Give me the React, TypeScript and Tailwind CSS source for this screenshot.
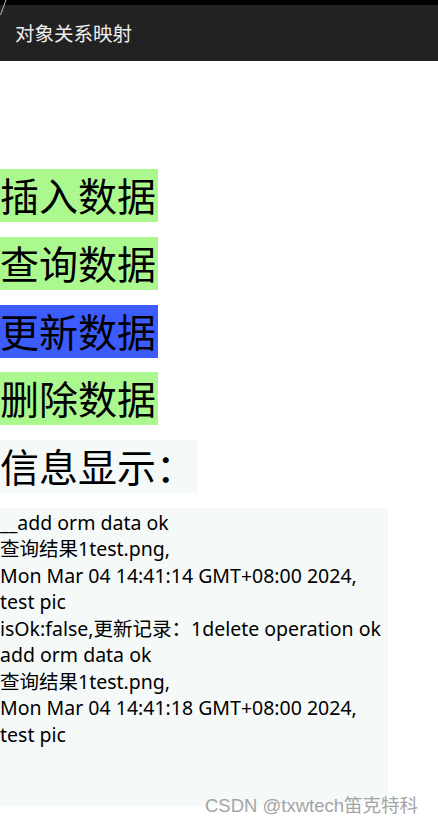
import React from "react";

const FONT = '"Noto Sans", "Noto Sans CJK SC", sans-serif';

const lines = [
  "__add orm data ok",
  "查询结果1test.png,",
  "Mon Mar 04 14:41:14 GMT+08:00 2024,",
  "test pic",
  "isOk:false,更新记录：1delete operation ok",
  "add orm data ok",
  "查询结果1test.png,",
  "Mon Mar 04 14:41:18 GMT+08:00 2024,",
  "test pic",
];

export default function App() {
  return (
    <div
      className="relative w-[438px] h-[825px] bg-white overflow-hidden text-black"
      style={{ fontFamily: FONT }}
    >
      <div className="h-[5px] bg-black" />
      <div className="h-[56px] bg-[#222222] flex items-center pl-[15px] pt-[2px]">
        <span className="text-[19.5px] text-[#eeeeee] leading-none">对象关系映射</span>
      </div>
      <svg className="absolute left-0 top-0" width="8" height="18" viewBox="0 0 8 18">
        <path d="M6 0 L0.5 15" stroke="#bbbbbb" strokeWidth="1" fill="none" />
      </svg>

      <div className="mt-[108px] flex flex-col items-start gap-[14.8px]">
        <div className="w-[158px] h-[53px] bg-[#abf98e] text-[39px] leading-[53px] whitespace-nowrap">插入数据</div>
        <div className="w-[158px] h-[53px] bg-[#abf98e] text-[39px] leading-[53px] whitespace-nowrap">查询数据</div>
        <div className="w-[158px] h-[53px] bg-[#3d5cfd] text-[39px] leading-[53px] whitespace-nowrap">更新数据</div>
        <div className="w-[158px] h-[53px] bg-[#abf98e] text-[39px] leading-[53px] whitespace-nowrap">删除数据</div>
        <div className="w-[198px] h-[53px] bg-[#f5faf9] text-[39px] leading-[53px] whitespace-nowrap">信息显示：</div>
        <div className="w-[388px] h-[298px] bg-[#f5faf9] pt-[2px] text-[19.5px] leading-[26.5px]">
          {lines.map((l, i) => (
            <div key={i} className="whitespace-nowrap">{l}</div>
          ))}
        </div>
      </div>

      <div
        className="absolute left-[205px] top-[795px] text-[18.5px] leading-[22px] text-[#a4a4a4] whitespace-nowrap"
        style={{ fontFamily: '"Liberation Sans", "Noto Sans CJK SC", sans-serif' }}
      >
        CSDN @txwtech笛克特科
      </div>
    </div>
  );
}
